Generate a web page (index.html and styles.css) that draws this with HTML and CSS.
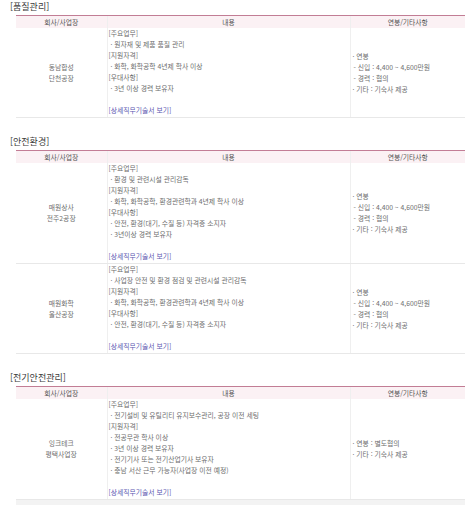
FILE: index.html
```html
<!DOCTYPE html>
<html lang="ko">
<head>
<meta charset="utf-8">
<title>채용 직무</title>
<link rel="stylesheet" href="styles.css">
</head>
<body>
<div class="page">
  <section class="sec">
    <h2 class="sec-title">[품질관리]</h2>
    <table class="jobs">
      <colgroup><col class="c1"><col class="c2"><col class="c3"></colgroup>
      <thead><tr><th>회사/사업장</th><th>내용</th><th>연봉/기타사항</th></tr></thead>
      <tbody>
        <tr>
          <td class="co">동남합성<br>단천공장</td>
          <td class="desc">
            <div class="lbl">[주요업무]</div>
            <div class="item">· 원자재 및 제품 품질 관리</div>
            <div class="lbl">[지원자격]</div>
            <div class="item">· 화학, 화학공학 4년제 학사 이상</div>
            <div class="lbl">[우대사항]</div>
            <div class="item">· 3년 이상 경력 보유자</div>
            <a class="more" href="#">[상세직무기술서 보기]</a>
          </td>
          <td class="pay">
            <div>· 연봉</div>
            <div class="sub">- 신입 : 4,400 ~ 4,600만원</div>
            <div class="sub">- 경력 : 협의</div>
            <div>· 기타 : 기숙사 제공</div>
          </td>
        </tr>
      </tbody>
    </table>
  </section>

  <section class="sec">
    <h2 class="sec-title">[안전환경]</h2>
    <table class="jobs">
      <colgroup><col class="c1"><col class="c2"><col class="c3"></colgroup>
      <thead><tr><th>회사/사업장</th><th>내용</th><th>연봉/기타사항</th></tr></thead>
      <tbody>
        <tr>
          <td class="co">매원상사<br>전주2공장</td>
          <td class="desc">
            <div class="lbl">[주요업무]</div>
            <div class="item">· 환경 및 관련시설 관리감독</div>
            <div class="lbl">[지원자격]</div>
            <div class="item">· 화학, 화학공학, 환경관련학과 4년제 학사 이상</div>
            <div class="lbl">[우대사항]</div>
            <div class="item">· 안전, 환경(대기, 수질 등) 자격증 소지자</div>
            <div class="item">· 3년이상 경력 보유자</div>
            <a class="more" href="#">[상세직무기술서 보기]</a>
          </td>
          <td class="pay">
            <div>· 연봉</div>
            <div class="sub">- 신입 : 4,400 ~ 4,600만원</div>
            <div class="sub">- 경력 : 협의</div>
            <div>· 기타 : 기숙사 제공</div>
          </td>
        </tr>
        <tr>
          <td class="co">매원화학<br>울산공장</td>
          <td class="desc">
            <div class="lbl">[주요업무]</div>
            <div class="item">· 사업장 안전 및 환경 점검 및 관련시설 관리감독</div>
            <div class="lbl">[지원자격]</div>
            <div class="item">· 화학, 화학공학, 환경관련학과 4년제 학사 이상</div>
            <div class="lbl">[우대사항]</div>
            <div class="item">· 안전, 환경(대기, 수질 등) 자격증 소지자</div>
            <a class="more" href="#">[상세직무기술서 보기]</a>
          </td>
          <td class="pay">
            <div>· 연봉</div>
            <div class="sub">- 신입 : 4,400 ~ 4,600만원</div>
            <div class="sub">- 경력 : 협의</div>
            <div>· 기타 : 기숙사 제공</div>
          </td>
        </tr>
      </tbody>
    </table>
  </section>

  <section class="sec">
    <h2 class="sec-title">[전기안전관리]</h2>
    <table class="jobs">
      <colgroup><col class="c1"><col class="c2"><col class="c3"></colgroup>
      <thead><tr><th>회사/사업장</th><th>내용</th><th>연봉/기타사항</th></tr></thead>
      <tbody>
        <tr>
          <td class="co">잉크테크<br>평택사업장</td>
          <td class="desc">
            <div class="lbl">[주요업무]</div>
            <div class="item">· 전기설비 및 유틸리티 유지보수관리, 공장 이전 세팅</div>
            <div class="lbl">[지원자격]</div>
            <div class="item">· 전공무관 학사 이상</div>
            <div class="item">· 3년 이상 경력 보유자</div>
            <div class="item">· 전기기사 또는 전기산업기사 보유자</div>
            <div class="item">· 충남 서산 근무 가능자(사업장 이전 예정)</div>
            <a class="more" href="#">[상세직무기술서 보기]</a>
          </td>
          <td class="pay">
            <div>· 연봉 : 별도협의</div>
            <div>· 기타 : 기숙사 제공</div>
          </td>
        </tr>
      </tbody>
    </table>
    <div class="foot"></div>
  </section>
</div>
</body>
</html>
```

FILE: styles.css
```css
html, body {
  margin: 0;
  padding: 0;
  background: #ffffff;
}

.page {
  padding: 1px 0 0 10px;
  font-family: "Noto Sans CJK KR", "Noto Sans", sans-serif;
  color: #6e6e6e;
}

.sec + .sec {
  margin-top: 18px;
}

.sec-title {
  margin: 0 0 2px 0;
  font-size: 9px;
  line-height: 12px;
  height: 12px;
  font-weight: normal;
  color: #3a3a3a;
}

.jobs {
  margin-left: 6px;
  width: 449px;
  border-collapse: collapse;
  table-layout: fixed;
  font-size: 6.8px;
  line-height: 11px;
}

.c1 { width: 91px; }
.c2 { width: 243px; }
.c3 { width: 115px; }

.jobs th {
  border-top: 1px solid #c27d95;
  background: #fbf1f4;
  font-weight: normal;
  color: #555555;
  height: 12px;
  line-height: 12px;
  padding: 0;
  text-align: center;
}

.jobs th + th,
.jobs td + td {
  border-left: 1px solid #efefef;
}

.jobs td {
  border-bottom: 1px solid #e8e8e8;
  padding: 0;
  vertical-align: middle;
}

.jobs .co {
  text-align: center;
}

.jobs .desc {
  vertical-align: top;
  padding: 0 2px 1px 1px;
}

.item {
  padding-left: 2px;
  white-space: nowrap;
}

.more {
  display: block;
  margin-top: 11px;
  color: #5a55b0;
  text-decoration: none;
}

.jobs .pay {
  padding-left: 2px;
}

.pay .sub {
  padding-left: 1px;
}

.foot {
  margin-left: 6px;
  width: 449px;
  height: 10px;
  background: #f3f3f3;
}
```
